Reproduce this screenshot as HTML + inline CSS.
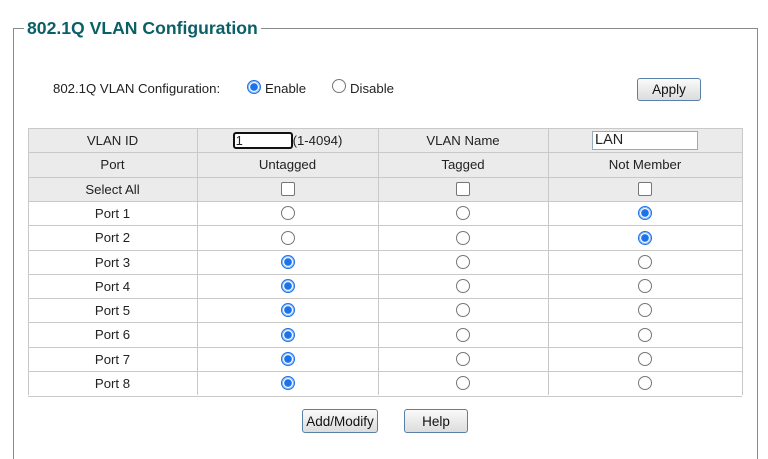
<!DOCTYPE html>
<html><head><meta charset="utf-8"><style>
body{margin:0;width:768px;height:440px;background:#fff;font-family:"Liberation Sans",Arial,sans-serif;font-size:13.2px;color:#222;position:relative;overflow:hidden}
.a{position:absolute}
.fs{left:13px;top:28px;width:743px;height:430px;border:1px solid #8a8a8a;border-bottom:none}
.title{left:24px;top:18px;background:#fff;padding:0 3px;font-size:17.6px;font-weight:bold;color:#0b5f66}
.row{position:absolute;left:28px;width:714px;border-top:1px solid #c9c9c9}
.g{background:#ebebeb}
.c{position:absolute;top:-1px;height:100%;display:flex;align-items:center;justify-content:center}
.c1{left:0;width:169px}.c2{left:169px;width:181px}.c3{left:350px;width:170px}.c4{left:520px;width:194px}
.vl{position:absolute;top:128px;width:1px;height:267px;background:#c9c9c9}
.r{width:12px;height:12px;border:1px solid #767676;border-radius:50%;background:#fff;box-sizing:content-box}
.r.on{border:1px solid #1a73e8;background:radial-gradient(circle,#1a73e8 0 3.5px,#fff 4.1px 100%);box-shadow:0 0 0 1px #8fb8f5 inset}
.cb{width:12px;height:12px;border:1px solid #767676;border-radius:2px;background:#fff}
.btn{position:absolute;border:1px solid #5a7fa8;border-radius:3px;background:linear-gradient(#fafafa,#dcdcdc);font-size:13.5px;color:#111;display:flex;align-items:center;justify-content:center;box-sizing:border-box}
</style></head><body>
<div class="a fs"></div>
<div class="a title">802.1Q VLAN Configuration</div>

<div class="a" style="left:53px;top:81px">802.1Q VLAN Configuration:</div>
<div class="a r on" style="left:247px;top:80px"></div>
<div class="a" style="left:265px;top:81px">Enable</div>
<div class="a r" style="left:332px;top:79px"></div>
<div class="a" style="left:350px;top:81px">Disable</div>
<div class="btn" style="left:637px;top:78px;width:64px;height:23px">Apply</div>

<div class="row g" style="top:128px;height:24px">
 <div class="c c1">VLAN ID</div>
 <div class="c c2"><span style="display:inline-block;width:60px;height:17px;border:2px solid #111;border-radius:3px;box-sizing:border-box;font-size:13px;line-height:13px;padding-left:1px;background:#fff">1</span>(1-4094)</div>
 <div class="c c3">VLAN Name</div>
 <div class="c c4"><span style="display:inline-block;width:106px;height:19px;border:1px solid #9ab;box-sizing:border-box;background:#fff;font-size:14.5px;line-height:17px;padding-left:2px;text-align:left">LAN</span></div>
</div>
<div class="row g" style="top:152px;height:25px"><div class="c c1">Port</div><div class="c c2">Untagged</div><div class="c c3">Tagged</div><div class="c c4">Not Member</div></div>
<div class="row g" style="top:177px;height:24px"><div class="c c1">Select All</div><div class="c c2"><span class="cb"></span></div><div class="c c3"><span class="cb"></span></div><div class="c c4"><span class="cb"></span></div></div>
<div class="row" style="top:201px;height:24px"><div class="c c1">Port 1</div><div class="c c2"><span class="r"></span></div><div class="c c3"><span class="r"></span></div><div class="c c4"><span class="r on"></span></div></div>
<div class="row" style="top:225px;height:25px"><div class="c c1">Port 2</div><div class="c c2"><span class="r"></span></div><div class="c c3"><span class="r"></span></div><div class="c c4"><span class="r on"></span></div></div>
<div class="row" style="top:250px;height:24px"><div class="c c1">Port 3</div><div class="c c2"><span class="r on"></span></div><div class="c c3"><span class="r"></span></div><div class="c c4"><span class="r"></span></div></div>
<div class="row" style="top:274px;height:24px"><div class="c c1">Port 4</div><div class="c c2"><span class="r on"></span></div><div class="c c3"><span class="r"></span></div><div class="c c4"><span class="r"></span></div></div>
<div class="row" style="top:298px;height:24px"><div class="c c1">Port 5</div><div class="c c2"><span class="r on"></span></div><div class="c c3"><span class="r"></span></div><div class="c c4"><span class="r"></span></div></div>
<div class="row" style="top:322px;height:25px"><div class="c c1">Port 6</div><div class="c c2"><span class="r on"></span></div><div class="c c3"><span class="r"></span></div><div class="c c4"><span class="r"></span></div></div>
<div class="row" style="top:347px;height:24px"><div class="c c1">Port 7</div><div class="c c2"><span class="r on"></span></div><div class="c c3"><span class="r"></span></div><div class="c c4"><span class="r"></span></div></div>
<div class="row" style="top:371px;height:24px;border-bottom:1px solid #c9c9c9"><div class="c c1">Port 8</div><div class="c c2"><span class="r on"></span></div><div class="c c3"><span class="r"></span></div><div class="c c4"><span class="r"></span></div></div>
<div class="vl" style="left:28px"></div>
<div class="vl" style="left:197px"></div>
<div class="vl" style="left:378px"></div>
<div class="vl" style="left:548px"></div>
<div class="vl" style="left:742px"></div>

<div class="btn" style="left:302px;top:409px;width:76px;height:24px">Add/Modify</div>
<div class="btn" style="left:404px;top:409px;width:64px;height:24px">Help</div>
</body></html>
